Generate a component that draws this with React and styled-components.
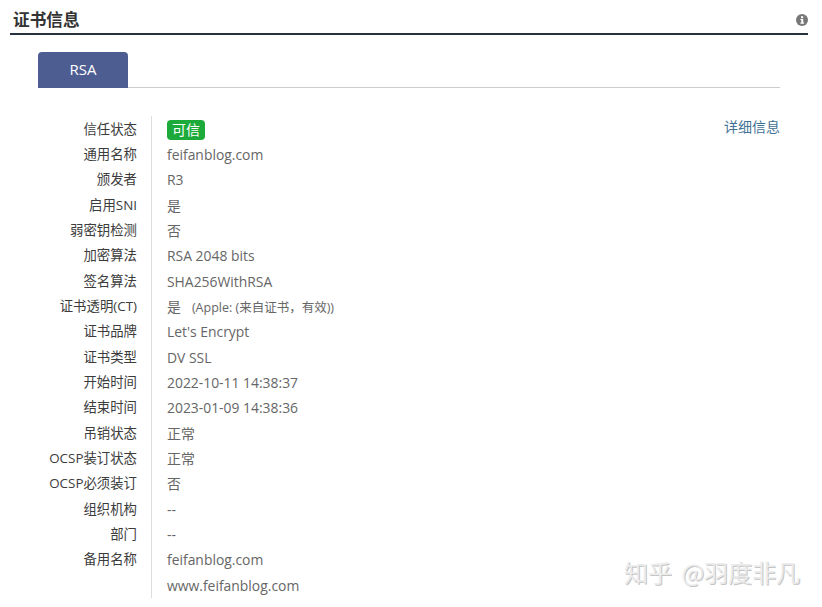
import React from 'react';
import styled, { createGlobalStyle } from 'styled-components';

const Global = createGlobalStyle`
  html, body { margin: 0; padding: 0; background: #fff; }
  body { font-family: "Open Sans", "Noto Sans CJK SC", sans-serif; }
`;

const Page = styled.div`
  position: relative;
  width: 822px;
  height: 607px;
  overflow: hidden;
  padding: 0 14px 0 10px;
  box-sizing: border-box;
`;

const Header = styled.div`
  height: 33px;
  padding: 0 0 0 3px;
  display: flex;
  justify-content: space-between;
  border-bottom: 2px solid #26333f;
  box-sizing: content-box;
`;

const Title = styled.h2`
  margin: 9px 0 0;
  font: 700 16.7px/20px "Noto Sans CJK SC", sans-serif;
  color: #333;
`;

const Icon = styled.svg`
  display: block;
  margin-top: 14px;
`;

const Body = styled.div`
  padding: 17px 28px 0 28px;
`;

const Tabs = styled.div`
  display: flex;
  border-bottom: 1px solid #ccc;
  height: 35px;
`;

const Tab = styled.div`
  width: 90px;
  height: 36px;
  background: #4d5d92;
  color: #fff;
  border-radius: 4px 4px 0 0;
  font-size: 15px;
  line-height: 34px;
  text-align: center;
`;

const Detail = styled.div`
  display: flex;
  margin-top: 28px;
`;

const Labels = styled.div`
  width: 99px;
  padding: 0.6px 14px 0 0;
  border-right: 1px solid #ddd;
  box-sizing: content-box;
`;

const Values = styled.div`
  flex: 1;
  padding: 0.6px 0 0 15px;
`;

const Row = styled.div`
  height: 25.33px;
  line-height: 25.33px;
  font-size: ${p => (p.$label ? '13.4px' : '13.9px')};
  color: ${p => (p.$label ? '#3c3c3c' : '#666')};
  text-align: ${p => (p.$label ? 'right' : 'left')};
  white-space: nowrap;
`;

const Badge = styled.span`
  display: inline-block;
  width: 38px;
  height: 20px;
  line-height: 20px;
  border-radius: 4px;
  background: #1cab3a;
  color: #fff;
  font-size: 14px;
  text-align: center;
`;

const Note = styled.span`
  font-size: 12.5px;
  margin-left: 11px;
`;

const TopRow = styled.div`
  display: flex;
  justify-content: space-between;
`;

const Link = styled.span`
  color: #3f7294;
  font-size: 14px;
  line-height: 20px;
`;

const Watermark = styled.div`
  position: absolute;
  left: 624px;
  top: 558px;
  font: 400 24px/28px "Noto Sans CJK SC", sans-serif;
  word-spacing: 4px;
  color: #ececec;
  text-shadow: 1px 1px 0 #c4c4c4;
  white-space: nowrap;
`;

const InfoIcon = () => (
  <Icon width="12" height="12" viewBox="0 0 12 12">
    <circle cx="6" cy="6" r="6" fill="#777" />
    <rect x="5" y="2.2" width="2.2" height="2" fill="#fff" />
    <path d="M4.4 5h2.8v3.6h.9v1.1H4.4V8.6h.9V6.1h-.9z" fill="#fff" />
  </Icon>
);

const labels = ['信任状态', '通用名称', '颁发者', '启用SNI', '弱密钥检测', '加密算法', '签名算法', '证书透明(CT)', '证书品牌', '证书类型', '开始时间', '结束时间', '吊销状态', 'OCSP装订状态', 'OCSP必须装订', '组织机构', '部门', '备用名称', ''];

const values = ['feifanblog.com', 'R3', '是', '否', 'RSA 2048 bits', 'SHA256WithRSA', null, "Let's Encrypt", 'DV SSL', '2022-10-11 14:38:37', '2023-01-09 14:38:36', '正常', '正常', '否', '--', '--', 'feifanblog.com', 'www.feifanblog.com'];

export default function App() {
  return (
    <Page>
      <Global />
      <Header>
        <Title>证书信息</Title>
        <InfoIcon />
      </Header>
      <Body>
        <Tabs>
          <Tab>RSA</Tab>
        </Tabs>
        <Detail>
          <Labels>
            {labels.map((l, i) => <Row $label key={i}>{l}</Row>)}
          </Labels>
          <Values>
            <TopRow>
              <Row><Badge>可信</Badge></Row>
              <Link>详细信息</Link>
            </TopRow>
            {values.map((v, i) => (
              <Row key={i}>
                {v === null ? <>是<Note>(Apple: (来自证书，有效))</Note></> : v}
              </Row>
            ))}
          </Values>
        </Detail>
      </Body>
      <Watermark>知乎 @羽度非凡</Watermark>
    </Page>
  );
}
